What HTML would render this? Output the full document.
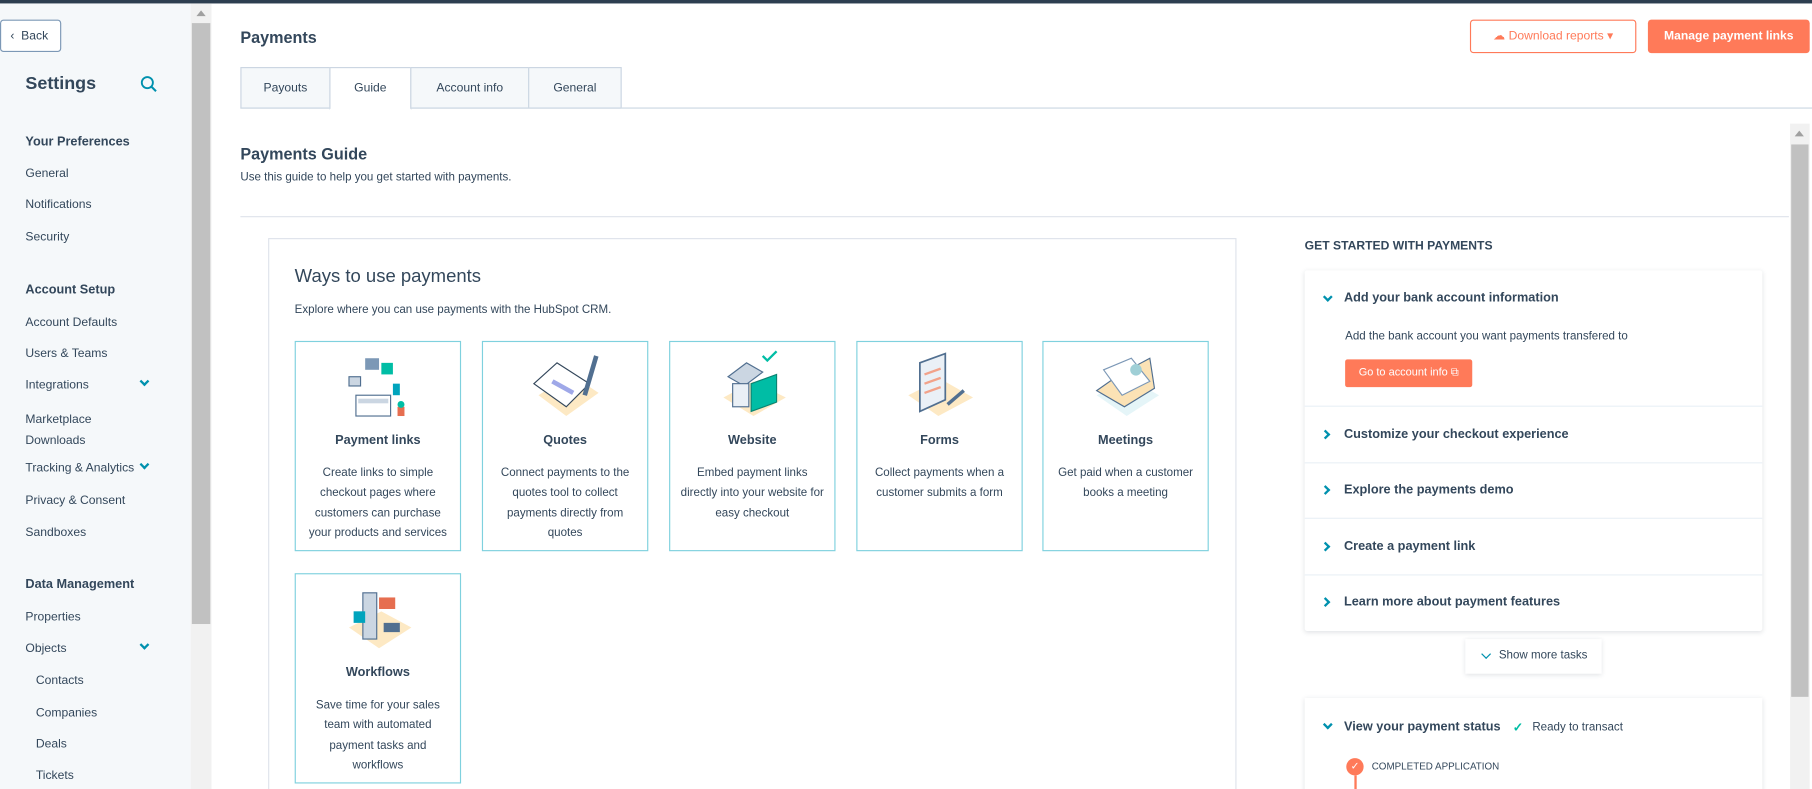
<!DOCTYPE html>
<html><head><meta charset="utf-8"><style>
*{box-sizing:border-box;margin:0;padding:0}
html,body{width:1812px;height:789px;overflow:hidden;background:#fff}
#w{width:1568px;height:683px;position:relative;transform:scale(1.15561);transform-origin:0 0;font-family:"Liberation Sans",sans-serif;color:#33475b;overflow:hidden}
.a{position:absolute}
.top{left:0;top:0;width:1568px;height:3px;background:#2d3e50}
.side{left:0;top:3px;width:165px;height:680px;background:#f5f8fa}
.sb{left:165px;top:3px;width:18px;height:680px;background:#f1f1f1}
.thumb{background:#c1c1c1}
.nav{position:absolute;left:22px;font-size:10.5px;color:#33475b}
.nh{font-weight:bold;font-size:11px}
.chev{position:absolute;left:122px;width:6px;height:6px;border-right:2px solid #0091ae;border-bottom:2px solid #0091ae;transform:rotate(45deg)}
.tab{position:absolute;top:58px;height:36px;background:#f5f8fa;border:1px solid #cbd6e2;font-size:10.5px;text-align:center;line-height:34px}
.tile{position:absolute;width:144px;height:182px;border:1px solid #7fd1de;text-align:center}
.tile h4{position:absolute;top:79px;width:100%;font-size:11px;font-weight:bold}
.tile p{position:absolute;top:105px;left:6px;right:6px;font-size:10px;line-height:17.3px}
.tile svg{position:absolute;left:40px;top:6px}
.row{position:absolute;left:1129px;width:396px;font-size:11px;font-weight:bold}
.rc{position:absolute;left:17px;width:6px;height:6px;border-right:2px solid #0091ae;border-bottom:2px solid #0091ae}
</style></head><body><div id="w">
<div class="a top"></div>
<div class="a side"></div>
<div class="a sb"><div class="a thumb" style="left:1px;top:17px;width:16px;height:520px"></div><div class="a" style="left:5px;top:6px;border:4px solid transparent;border-bottom:5px solid #a0a0a0;border-top:0"></div></div>
<div class="a" style="left:0;top:17px;width:53px;height:28px;border:1px solid #7c98b6;border-radius:3px;background:#fff;font-size:10.5px;line-height:26px;padding-left:8px">‹&nbsp; Back</div>
<div class="a" style="left:22px;top:64px;font-size:15.5px;font-weight:bold">Settings</div>
<svg class="a" style="left:121px;top:65px" width="16" height="16"><circle cx="6.5" cy="6.5" r="4.8" fill="none" stroke="#0091ae" stroke-width="1.6"/><path d="M10 10l4 4" stroke="#0091ae" stroke-width="1.8"/></svg>
<div class="nav nh" style="top:117px">Your Preferences</div>
<div class="nav" style="top:144px">General</div>
<div class="nav" style="top:171px">Notifications</div>
<div class="nav" style="top:199px">Security</div>
<div class="nav nh" style="top:245px">Account Setup</div>
<div class="nav" style="top:273px">Account Defaults</div>
<div class="nav" style="top:300px">Users &amp; Teams</div>
<div class="nav" style="top:327px">Integrations</div><div class="chev" style="top:327px"></div>
<div class="nav" style="top:354px;line-height:18px">Marketplace<br>Downloads</div>
<div class="nav" style="top:399px">Tracking &amp; Analytics</div><div class="chev" style="top:399px"></div>
<div class="nav" style="top:427px">Privacy &amp; Consent</div>
<div class="nav" style="top:455px">Sandboxes</div>
<div class="nav nh" style="top:500px">Data Management</div>
<div class="nav" style="top:528px">Properties</div>
<div class="nav" style="top:555px">Objects</div><div class="chev" style="top:555px"></div>
<div class="nav" style="top:583px;left:31px">Contacts</div>
<div class="nav" style="top:611px;left:31px">Companies</div>
<div class="nav" style="top:638px;left:31px">Deals</div>
<div class="nav" style="top:665px;left:31px">Tickets</div>

<div class="a" style="left:208px;top:24px;font-size:14px;font-weight:bold">Payments</div>
<div class="a" style="left:1272px;top:17px;width:144px;height:29px;border:1px solid #ff7a59;border-radius:3px;color:#ff7a59;font-size:10.5px;line-height:27px;text-align:center">☁ Download reports ▾</div>
<div class="a" style="left:1426px;top:17px;width:140px;height:29px;background:#ff7a59;border-radius:3px;color:#fff;font-size:10.5px;line-height:29px;text-align:center;font-weight:bold">Manage payment links</div>
<div class="a" style="left:208px;top:93px;width:1360px;height:1px;background:#cbd6e2"></div>
<div class="tab" style="left:208px;width:78px">Payouts</div>
<div class="tab" style="left:285px;width:71px;background:#fff;border-bottom-color:#fff;height:37px">Guide</div>
<div class="tab" style="left:355px;width:103px">Account info</div>
<div class="tab" style="left:457px;width:81px">General</div>

<div class="a" style="left:1549px;top:107px;width:17px;height:576px;background:#f1f1f1"><div class="a thumb" style="left:1px;top:18px;width:15px;height:478px"></div><div class="a" style="left:4px;top:6px;border:4px solid transparent;border-bottom:5px solid #a0a0a0;border-top:0"></div></div>

<div class="a" style="left:208px;top:125px;font-size:14px;font-weight:bold">Payments Guide</div>
<div class="a" style="left:208px;top:148px;font-size:10px">Use this guide to help you get started with payments.</div>
<div class="a" style="left:208px;top:187px;width:1340px;height:1px;background:#dfe3eb"></div>

<div class="a" style="left:232px;top:206px;width:838px;height:490px;border:1px solid #dfe3eb"></div>
<div class="a" style="left:255px;top:231px;font-size:16px">Ways to use payments</div>
<div class="a" style="left:255px;top:263px;font-size:10px">Explore where you can use payments with the HubSpot CRM.</div>

<div class="tile" style="left:255px;top:295px"><svg width="64" height="64"><rect x="12" y="40" width="30" height="18" fill="#fff" stroke="#516f90"/><rect x="14" y="43" width="26" height="4" fill="#cbd6e2"/><rect x="20" y="8" width="12" height="10" fill="#7c98b6"/><rect x="34" y="12" width="10" height="10" fill="#00bda5"/><rect x="6" y="24" width="10" height="8" fill="#cbd6e2" stroke="#516f90"/><rect x="44" y="30" width="6" height="10" fill="#00a4bd"/><rect x="48" y="50" width="6" height="8" fill="#e66e50"/><circle cx="51" cy="48" r="3" fill="#00bda5"/></svg><h4>Payment links</h4><p>Create links to simple checkout pages where customers can purchase your products and services</p></div>
<div class="tile" style="left:417px;top:295px"><svg width="64" height="64"><path d="M8 40l24 18 28-20-24-16z" fill="#fde9c4"/><path d="M4 30L24 12 52 30 32 50z" fill="#fff" stroke="#33475b"/><path d="M20 28l18 10" stroke="#9fa8e8" stroke-width="4"/><path d="M48 40L58 6" stroke="#516f90" stroke-width="4"/></svg><h4>Quotes</h4><p>Connect payments to the quotes tool to collect payments directly from quotes</p></div>
<div class="tile" style="left:579px;top:295px"><svg width="64" height="64"><path d="M6 42l26 16 28-16-28-14z" fill="#fde9c4"/><path d="M10 24L26 12 40 20 24 32z" fill="#cbd6e2" stroke="#516f90"/><rect x="14" y="30" width="14" height="20" fill="#eaf0f6" stroke="#516f90"/><path d="M30 30l22-8v24l-22 8z" fill="#00bda5" stroke="#0b8372"/><path d="M40 6l4 4 8-8" stroke="#00bda5" stroke-width="2" fill="none"/></svg><h4>Website</h4><p>Embed payment links directly into your website for easy checkout</p></div>
<div class="tile" style="left:741px;top:295px"><svg width="64" height="64"><path d="M4 40l26 18 30-16-28-16z" fill="#fde9c4"/><path d="M14 12l22-8v40l-22 10z" fill="#eaf0f6" stroke="#516f90" stroke-width="1.5"/><path d="M18 22l14-5M18 30l14-5M18 38l14-5" stroke="#f2a28a" stroke-width="2"/><path d="M38 48l14-12" stroke="#516f90" stroke-width="3"/></svg><h4>Forms</h4><p>Collect payments when a customer submits a form</p></div>
<div class="tile" style="left:902px;top:295px"><svg width="64" height="64"><path d="M6 40l26 18 28-18-26-14z" fill="#e5f5f8"/><path d="M6 36l24 14 26-16-4-26-26 14z" fill="#fbe2b5" stroke="#516f90"/><path d="M12 18l24-10 16 20-24 12z" fill="#fff" stroke="#7c98b6"/><circle cx="40" cy="18" r="5" fill="#9fcfd6"/></svg><h4>Meetings</h4><p>Get paid when a customer books a meeting</p></div>
<div class="tile" style="left:255px;top:496px"><svg width="64" height="64"><path d="M6 40l26 18 28-18-26-14z" fill="#fde9c4"/><rect x="18" y="10" width="12" height="40" fill="#cbd6e2" stroke="#516f90"/><rect x="32" y="14" width="14" height="10" fill="#e66e50"/><rect x="10" y="26" width="10" height="10" fill="#00a4bd"/><rect x="36" y="36" width="14" height="8" fill="#516f90"/></svg><h4>Workflows</h4><p>Save time for your sales team with automated payment tasks and workflows</p></div>

<div class="a" style="left:1129px;top:207px;font-size:10.5px;font-weight:bold">GET STARTED WITH PAYMENTS</div>
<div class="a" style="left:1129px;top:234px;width:396px;height:312px;background:#fff;box-shadow:0 1px 4px rgba(45,62,80,.15);border-radius:2px"></div>
<div class="a" style="left:1129px;top:351px;width:396px;height:1px;background:#eaf0f6"></div>
<div class="a" style="left:1129px;top:400px;width:396px;height:1px;background:#eaf0f6"></div>
<div class="a" style="left:1129px;top:448px;width:396px;height:1px;background:#eaf0f6"></div>
<div class="a" style="left:1129px;top:497px;width:396px;height:1px;background:#eaf0f6"></div>
<div class="row" style="top:252px"><div class="rc" style="top:2px;transform:rotate(45deg)"></div><span style="position:absolute;left:34px">Add your bank account information</span></div>
<div class="a" style="left:1164px;top:286px;font-size:10px">Add the bank account you want payments transfered to</div>
<div class="a" style="left:1164px;top:311px;width:110px;height:24px;background:#ff7a59;border-radius:2px;color:#fff;font-size:9.5px;line-height:24px;text-align:center">Go to account info ⧉</div>
<div class="row" style="top:370px"><div class="rc" style="top:3px;left:15px;transform:rotate(-45deg)"></div><span style="position:absolute;left:34px">Customize your checkout experience</span></div>
<div class="row" style="top:418px"><div class="rc" style="top:3px;left:15px;transform:rotate(-45deg)"></div><span style="position:absolute;left:34px">Explore the payments demo</span></div>
<div class="row" style="top:467px"><div class="rc" style="top:3px;left:15px;transform:rotate(-45deg)"></div><span style="position:absolute;left:34px">Create a payment link</span></div>
<div class="row" style="top:515px"><div class="rc" style="top:3px;left:15px;transform:rotate(-45deg)"></div><span style="position:absolute;left:34px">Learn more about payment features</span></div>
<div class="a" style="left:1268px;top:553px;width:118px;height:30px;background:#fff;box-shadow:0 1px 4px rgba(45,62,80,.15);font-size:10px;line-height:30px;padding-left:29px">Show more tasks</div>
<div class="a" style="left:1283px;top:563px;width:6px;height:6px;border-right:1.5px solid #0091ae;border-bottom:1.5px solid #0091ae;transform:rotate(45deg)"></div>
<div class="a" style="left:1129px;top:604px;width:396px;height:100px;background:#fff;box-shadow:0 1px 4px rgba(45,62,80,.15)"></div>
<div class="row" style="top:623px"><div class="rc" style="top:1px;transform:rotate(45deg)"></div><span style="position:absolute;left:34px">View your payment status</span><span style="position:absolute;left:180px;color:#00bda5">✓</span><span style="position:absolute;left:197px;font-weight:normal;font-size:10px;top:1px">Ready to transact</span></div>
<div class="a" style="left:1165px;top:656px;width:15px;height:15px;border-radius:50%;background:#ff7a59;color:#fff;font-size:9px;text-align:center;line-height:15px">✓</div>
<div class="a" style="left:1172px;top:671px;width:1.5px;height:14px;background:#ff7a59"></div>
<div class="a" style="left:1187px;top:658px;font-size:8.5px">COMPLETED APPLICATION</div>
</div></body></html>
